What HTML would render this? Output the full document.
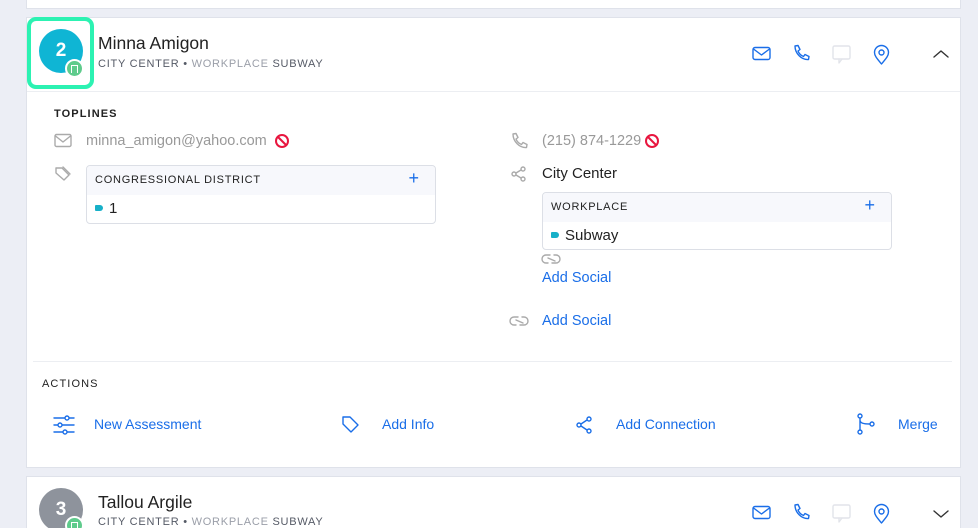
<!DOCTYPE html>
<html><head><style>
*{margin:0;padding:0;box-sizing:border-box}
html,body{width:978px;height:528px;overflow:hidden}
body{background:#eceef5;font-family:"Liberation Sans",sans-serif;position:relative}
.a{position:absolute}
.card{position:absolute;left:26px;width:935px;background:#fff;border:1px solid #dfe2ea}
.sub{font-size:11px;letter-spacing:0.75px;color:#555a66}
.sub span{color:#9a9ea8}
.lbl{font-size:11px;letter-spacing:1.1px;color:#222;font-weight:bold}
.blue{color:#1a6ee8}
.gray{color:#999}
svg{position:absolute;fill:none;stroke-width:1.4;stroke-linecap:round;stroke-linejoin:round}
.box{position:absolute;border:1px solid #dcdfe6;border-radius:4px;background:#fff}
.box .h{height:29px;background:#f7f8fc;border-radius:4px 4px 0 0;padding:8px 8px;font-size:11px;letter-spacing:0.75px;color:#222;position:relative}
.box .h b{position:absolute;right:16px;top:2px;font-weight:normal;color:#1a6ee8;font-size:18px;letter-spacing:0}
.box .r{padding:5px 8px;font-size:15px;color:#222}
.tag{display:inline-block;width:8px;height:6px;background:#17b0c8;border-radius:1px 3px 3px 1px;margin-right:6px;vertical-align:2px}
.act{font-size:14px}
.badge{position:absolute;width:19px;height:19px;border-radius:50%;background:#5fcb8c;border:2px solid #fff}
.badge:after{content:"";position:absolute;left:4px;top:4px;width:5px;height:7px;border:1.5px solid #fff;border-bottom:none}
</style></head><body>
<div class="card" style="top:-2px;height:11px"></div>
<div class="card" style="top:17px;height:451px"></div>
<div class="card" style="top:476px;height:80px"></div>

<div class="a" style="left:27px;top:17px;width:67px;height:72px;border:4px solid #2cf2b2;border-radius:9px"></div>
<div class="a" style="left:39px;top:29px;width:44px;height:44px;border-radius:50%;background:#0fb5d4;color:#fff;font-weight:bold;font-size:19px;text-align:center;line-height:44px">2</div>
<div class="badge" style="left:65px;top:59px"></div>
<div class="a" style="left:98px;top:33px;font-size:17.5px;color:#222">Minna Amigon</div>
<div class="a sub" style="left:98px;top:58px">CITY CENTER • <span>WORKPLACE</span> SUBWAY</div>

<svg style="left:752px;top:46px" width="20" height="16" stroke="#1a6ee8"><rect x="1" y="1.5" width="17" height="12" rx="2"/><path d="M1.5 3l8 6 8-6"/></svg>
<svg style="left:792px;top:44px" width="20" height="20" stroke="#1a6ee8"><path d="M3 2l3-.5 2 4-2 1.5c1 2.5 3 4.5 5.5 5.5l1.5-2 4 2-.5 3c-7 .5-13.5-6-13.5-13.5z"/></svg>
<svg style="left:832px;top:45px" width="20" height="20" stroke="#e2e4ea"><rect x="1" y="1" width="17" height="13" rx="1.5"/><path d="M7 14v4l3-4"/></svg>
<svg style="left:873px;top:44px" width="18" height="22" stroke="#1a6ee8"><path d="M8.5 20c-4-5-7-8-7-11.5a7 7 0 0 1 14 0c0 3.5-3 6.5-7 11.5z"/><circle cx="8.5" cy="8.5" r="2.5"/></svg>
<svg style="left:932px;top:48px" width="18" height="12" stroke="#333"><path d="M2 9l7-6 7 6"/></svg>
<div class="a" style="left:27px;top:91px;width:933px;height:1px;background:#eceef2"></div>

<div class="a lbl" style="left:54px;top:108px">TOPLINES</div>
<svg style="left:54px;top:133px" width="20" height="16" stroke="#aaa"><rect x="1" y="1.5" width="16" height="12" rx="1.5"/><path d="M1.5 3l7.5 6 7.5-6"/></svg>
<div class="a gray" style="left:86px;top:133px;font-size:14.5px">minna_amigon@yahoo.com</div>
<svg style="left:274px;top:133px" width="16" height="16" stroke="#e8163f"><circle cx="8" cy="8" r="6" stroke-width="2"/><path d="M4 4l8 8" stroke-width="2"/></svg>
<svg style="left:54px;top:166px" width="20" height="16" stroke="#aaa"><path d="M2 2h6l7 7-5 5-8-7z"/><path d="M9 1l7 7"/></svg>
<div class="box" style="left:86px;top:165px;width:350px;height:59px"><div class="h">CONGRESSIONAL DISTRICT<b>+</b></div><div class="r"><span class="tag"></span>1</div></div>

<svg style="left:510px;top:132px" width="18" height="18" stroke="#aaa"><path d="M3 2l3-.5 2 4-2 1.5c1 2.5 3 4.5 5.5 5.5l1.5-2 4 2-.5 3c-7 .5-13.5-6-13.5-13.5z"/></svg>
<div class="a gray" style="left:542px;top:133px;font-size:14.5px">(215) 874-1229</div>
<svg style="left:644px;top:133px" width="16" height="16" stroke="#e8163f"><circle cx="8" cy="8" r="6" stroke-width="2"/><path d="M4 4l8 8" stroke-width="2"/></svg>
<svg style="left:511px;top:166px" width="16" height="16" stroke="#aaa"><circle cx="3" cy="8" r="2"/><circle cx="12" cy="3" r="2"/><circle cx="12" cy="13" r="2"/><path d="M5 7l5-3M5 9l5 3"/></svg>
<div class="a" style="left:542px;top:165px;font-size:15px;color:#222">City Center</div>
<div class="box" style="left:542px;top:192px;width:350px;height:58px"><div class="h">WORKPLACE<b>+</b></div><div class="r"><span class="tag"></span>Subway</div></div>
<svg style="left:541px;top:252px" width="22" height="14" stroke="#aaa"><path d="M9 3H5a4 4 0 0 0 0 8h2M11 11h4a4 4 0 0 0 0-8h-2M7 6l7 3"/></svg>
<div class="a blue" style="left:542px;top:270px;font-size:14.5px">Add Social</div>
<svg style="left:509px;top:314px" width="22" height="14" stroke="#aaa"><path d="M9 3H5a4 4 0 0 0 0 8h2M11 11h4a4 4 0 0 0 0-8h-2M7 6l7 3"/></svg>
<div class="a blue" style="left:542px;top:313px;font-size:14.5px">Add Social</div>

<div class="a" style="left:33px;top:361px;width:919px;height:1px;background:#eceef2"></div>
<div class="a lbl" style="left:42px;top:378px;font-weight:normal;color:#222">ACTIONS</div>
<svg style="left:53px;top:415px" width="22" height="20" stroke="#1a6ee8"><path d="M1 3h20M1 10h20M1 17h20"/><circle cx="14" cy="3" r="2" fill="#fff"/><circle cx="7" cy="10" r="2" fill="#fff"/><circle cx="12" cy="17" r="2" fill="#fff"/></svg>
<div class="a blue act" style="left:94px;top:416px">New Assessment</div>
<svg style="left:341px;top:415px" width="20" height="20" stroke="#1a6ee8"><path d="M2 2h7l8 8-7 7-8-8z"/></svg>
<div class="a blue act" style="left:382px;top:416px">Add Info</div>
<svg style="left:575px;top:415px" width="20" height="20" stroke="#1a6ee8"><circle cx="4" cy="10" r="2"/><circle cx="14" cy="4" r="2"/><circle cx="14" cy="16" r="2"/><path d="M6 9l6-4M6 11l6 4"/></svg>
<div class="a blue act" style="left:616px;top:416px">Add Connection</div>
<svg style="left:856px;top:413px" width="22" height="24" stroke="#1a6ee8"><circle cx="4" cy="3" r="2"/><circle cx="4" cy="19" r="2"/><circle cx="16" cy="11" r="2"/><path d="M4 5v12M4 7c0 3 3 4 10 4"/></svg>
<div class="a blue act" style="left:898px;top:416px">Merge</div>

<div class="a" style="left:39px;top:488px;width:44px;height:44px;border-radius:50%;background:#8e939c;color:#fff;font-weight:bold;font-size:19px;text-align:center;line-height:44px">3</div>
<div class="badge" style="left:65px;top:516px"></div>
<div class="a" style="left:98px;top:492px;font-size:17.5px;color:#222">Tallou Argile</div>
<div class="a sub" style="left:98px;top:516px">CITY CENTER • <span>WORKPLACE</span> SUBWAY</div>
<svg style="left:752px;top:505px" width="20" height="16" stroke="#1a6ee8"><rect x="1" y="1.5" width="17" height="12" rx="2"/><path d="M1.5 3l8 6 8-6"/></svg>
<svg style="left:792px;top:503px" width="20" height="20" stroke="#1a6ee8"><path d="M3 2l3-.5 2 4-2 1.5c1 2.5 3 4.5 5.5 5.5l1.5-2 4 2-.5 3c-7 .5-13.5-6-13.5-13.5z"/></svg>
<svg style="left:832px;top:504px" width="20" height="20" stroke="#e2e4ea"><rect x="1" y="1" width="17" height="13" rx="1.5"/><path d="M7 14v4l3-4"/></svg>
<svg style="left:873px;top:503px" width="18" height="22" stroke="#1a6ee8"><path d="M8.5 20c-4-5-7-8-7-11.5a7 7 0 0 1 14 0c0 3.5-3 6.5-7 11.5z"/><circle cx="8.5" cy="8.5" r="2.5"/></svg>
<svg style="left:932px;top:508px" width="18" height="12" stroke="#333"><path d="M2 3l7 6 7-6"/></svg>
</body></html>
